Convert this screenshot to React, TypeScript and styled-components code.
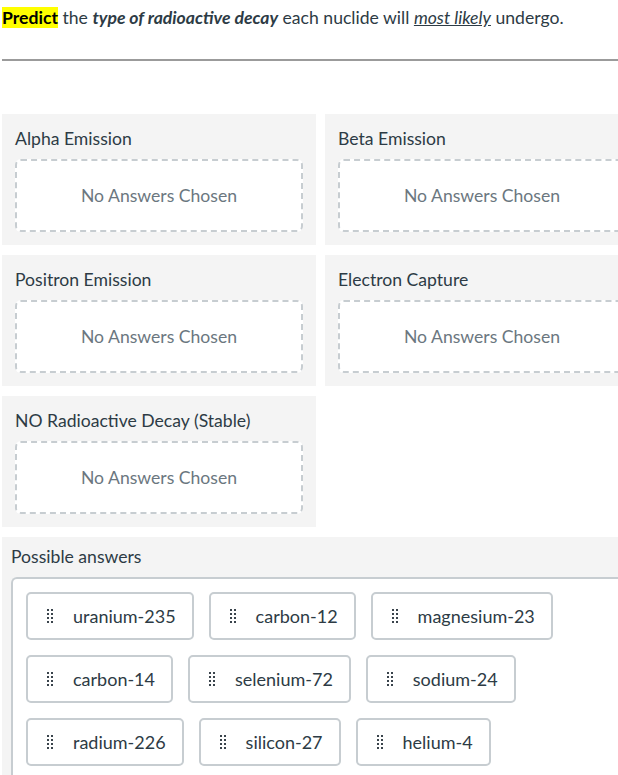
import React from 'react'
import styled, { createGlobalStyle } from 'styled-components'

const categories = [
  'Alpha Emission',
  'Beta Emission',
  'Positron Emission',
  'Electron Capture',
  'NO Radioactive Decay (Stable)',
]

const answers = [
  'uranium-235',
  'carbon-12',
  'magnesium-23',
  'carbon-14',
  'selenium-72',
  'sodium-24',
  'radium-226',
  'silicon-27',
  'helium-4',
]

const GlobalStyle = createGlobalStyle`
  html, body {
    margin: 0;
    padding: 0;
    background: #ffffff;
    overflow: hidden;
  }
  body {
    font-family: Lato, "Helvetica Neue", Arial, sans-serif;
    color: #2d3b45;
  }
`

const DragHandle = () => (
  <svg width="6" height="14" viewBox="0 0 6 14" aria-hidden="true">
    {[0, 1].map((c) =>
      [0, 1, 2, 3].map((r) => (
        <rect key={`${c}-${r}`} x={c * 4} y={r * 4} width="2" height="2" fill="#3a444c" />
      ))
    )}
  </svg>
)

export default function App() {
  return (
    <>
      <GlobalStyle />
      <Page>
        <Prompt>
          <Highlight>Predict</Highlight> the <em><b>type of radioactive decay</b></em> each nuclide will{' '}
          <Underlined>most likely</Underlined> undergo.
        </Prompt>
        <Rule />
        <CategoryGrid>
          {categories.map((name) => (
            <Category key={name}>
              <CategoryTitle>{name}</CategoryTitle>
              <DropZone>No Answers Chosen</DropZone>
            </Category>
          ))}
        </CategoryGrid>
        <AnswersPanel>
          <AnswersTitle>Possible answers</AnswersTitle>
          <AnswersBox>
            {answers.map((a) => (
              <Chip key={a}>
                <DragHandle />
                <ChipText>{a}</ChipText>
              </Chip>
            ))}
          </AnswersBox>
        </AnswersPanel>
      </Page>
    </>
  )
}

const Page = styled.div`
  width: 637px;
  padding-left: 2px;
`

const Prompt = styled.p`
  margin: 0;
  padding-top: 7px;
  font-size: 17.6px;
  line-height: 21px;
  em {
    font-style: italic;
  }
`

const Highlight = styled.span`
  background: #ffff00;
  color: #000000;
  font-weight: 700;
`

const Underlined = styled.span`
  font-style: italic;
  text-decoration: underline;
`

const Rule = styled.hr`
  margin: 31px 0 0;
  border: none;
  border-top: 2px solid #9b9b9b;
  width: 616px;
`

const CategoryGrid = styled.div`
  display: grid;
  grid-template-columns: 314px 314px;
  column-gap: 9px;
  row-gap: 10px;
  margin-top: 53px;
`

const Category = styled.div`
  background: #f4f4f4;
  padding: 13px;
  height: 131px;
  box-sizing: border-box;
  display: flex;
  flex-direction: column;
`

const CategoryTitle = styled.div`
  font-size: 17.6px;
  line-height: 24px;
  margin-bottom: 8px;
`

const DropZone = styled.div`
  flex: 1;
  border: 2px dashed #c7cdd1;
  border-radius: 6px;
  background: #ffffff;
  display: flex;
  align-items: center;
  justify-content: center;
  font-size: 17.6px;
  color: #6b7780;
`

const AnswersPanel = styled.div`
  background: #f4f4f4;
  margin-top: 10px;
  padding: 8px 0 0 9px;
`

const AnswersTitle = styled.div`
  font-size: 17.6px;
  line-height: 24px;
  margin-bottom: 8px;
`

const AnswersBox = styled.div`
  background: #ffffff;
  border: 2px solid #c7cdd1;
  border-right: none;
  border-bottom: none;
  border-top-left-radius: 6px;
  padding: 13px 13px 20px 13px;
  display: flex;
  flex-wrap: wrap;
  column-gap: 15px;
  row-gap: 15px;
`

const Chip = styled.div`
  display: flex;
  align-items: center;
  gap: 20px;
  height: 48px;
  box-sizing: border-box;
  padding: 0 16px 0 19px;
  border: 2px solid #c7cdd1;
  border-radius: 5px;
  background: #ffffff;
`

const ChipText = styled.span`
  font-size: 18px;
  color: #2d3b45;
`
